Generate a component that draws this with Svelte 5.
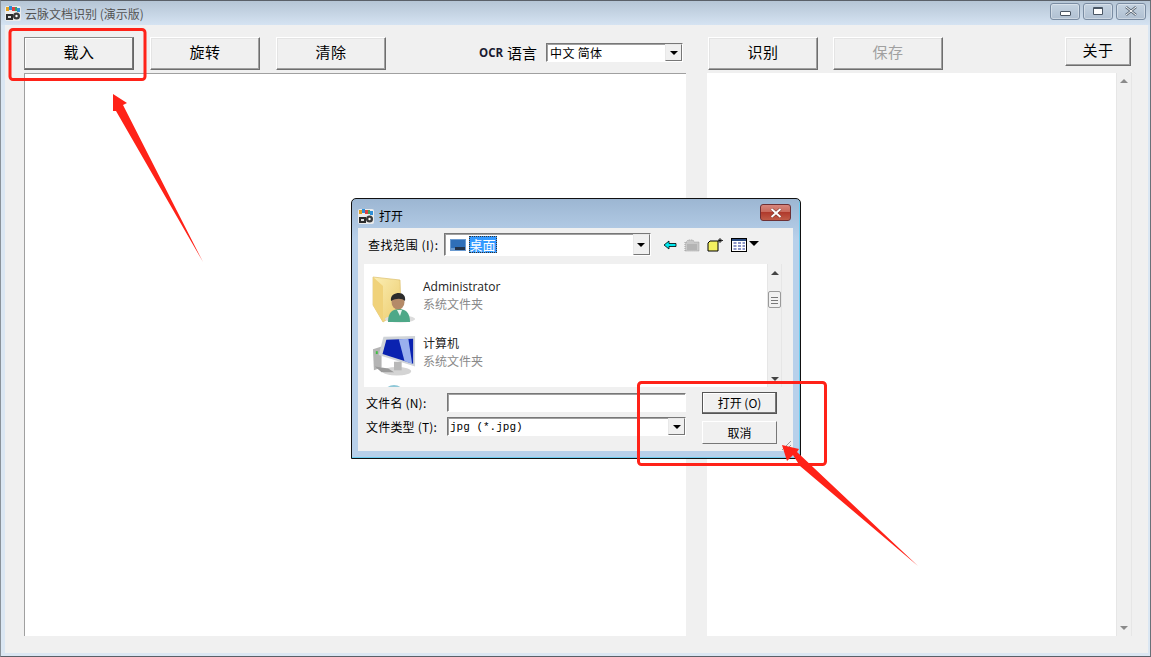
<script>
  const toolsLeft = [
    { label: '载入', cls: 'primary' },
    { label: '旋转' },
    { label: '清除' }
  ];
</script>

{#snippet appIcon()}
  <svg class="appicon" viewBox="0 0 16 16" width="16" height="16">
    <rect x="0" y="1" width="16" height="15" rx="2" fill="#ececec" />
    <rect x="1" y="2" width="3" height="4" fill="#e0a020" />
    <rect x="4" y="1" width="3" height="4" fill="#2f8fd8" />
    <rect x="7" y="2" width="3" height="4" fill="#e04040" />
    <rect x="10" y="2" width="2" height="4" fill="#40a060" />
    <rect x="12" y="3" width="3" height="4" fill="#2f8fd8" />
    <rect x="1" y="9" width="7" height="6" fill="#2c2c2c" />
    <rect x="3" y="11" width="3" height="2" fill="#ddd" />
    <circle cx="11.500" cy="11" r="3.500" fill="#3a3a3a" />
    <circle cx="11.500" cy="11" r="1.200" fill="#fff" />
  </svg>
{/snippet}

<div class="window">
  <div class="titlebar">
    {@render appIcon()}
    <span class="title">云脉文档识别 (演示版)</span>
    <div class="winbtns">
      <div class="winbtn"><span class="min"></span></div>
      <div class="winbtn"><span class="max"></span></div>
      <div class="winbtn close">
        <svg viewBox="0 0 14 10" width="14" height="10"><path d="M2 1l10 8M12 1L2 9" stroke="#5d6a78" stroke-width="2.6" /><path d="M2 1l10 8M12 1L2 9" stroke="#fff" stroke-width="1" /></svg>
      </div>
    </div>
  </div>

  <div class="client">
    <div class="toolbar">
      <div class="group left">
        {#each toolsLeft as t}
          <button class="btn {t.cls ?? ''}">{t.label}</button>
        {/each}
      </div>
      <div class="lang">
        <span class="ocr">OCR</span>
        <span class="langlabel">语言</span>
        <div class="select">
          <span class="seltext">中文 简体</span>
          <span class="drop small"><i></i></span>
        </div>
      </div>
      <div class="group right">
        <button class="btn">识别</button>
        <button class="btn disabled">保存</button>
        <button class="btn about">关于</button>
      </div>
    </div>

    <div class="panes">
      <div class="pane image"></div>
      <div class="pane text"></div>
      <div class="scrollbar">
        <span class="arr up"></span>
        <span class="arr down"></span>
      </div>
    </div>
  </div>
</div>

<div class="dialog">
  <div class="dlgtitle">
    {@render appIcon()}
    <span>打开</span>
    <div class="dlgclose">
      <svg viewBox="0 0 14 10" width="14" height="10"><path d="M2.5 1l9 8M11.5 1l-9 8" stroke="#6e2a22" stroke-width="3" /><path d="M2.5 1l9 8M11.5 1l-9 8" stroke="#fff" stroke-width="2" /></svg>
    </div>
  </div>
  <div class="dlgbody">
    <div class="lookin">
      <span class="dlglabel look">查找范围 (I):</span>
      <div class="field combo">
        <svg viewBox="0 0 16 12" width="16" height="12"><rect width="16" height="12" fill="#6a9ad0" /><rect x="1" y="1" width="14" height="8" fill="#2f6fb8" /><rect x="5" y="8" width="10" height="3" fill="#24344a" /></svg>
        <span class="sel">桌面</span>
        <span class="drop"><i></i></span>
      </div>
      <div class="navicons">
        <svg viewBox="0 0 14 12" width="14" height="12"><path d="M1 6l5-4v2.500h7v3H6V10z" fill="#00e8ee" stroke="#000" stroke-width=".8" /></svg>
        <svg viewBox="0 0 16 14" width="16" height="14"><path d="M1 13V4h2l1-2h5l1 2h5v9z" fill="#c8c8c8" stroke="#a0a0a0" stroke-dasharray="1 1" /><rect x="3" y="6" width="10" height="6" fill="#b4b4b4" /></svg>
        <svg viewBox="0 0 17 15" width="17" height="15"><path d="M1 14V6l2-2h8v10z" fill="#f4f060" stroke="#000" /><path d="M13 1v5M11 3.500h5M11.500 2l3 3M14.500 2l-3 3" stroke="#000" stroke-width=".8" /></svg>
        <svg class="views" viewBox="0 0 16 14" width="16" height="14"><rect x=".5" y=".5" width="15" height="13" fill="#fff" stroke="#000" /><rect x="1" y="1" width="14" height="2" fill="#2a4a80" /><path d="M2.500 5h3M7 5h3M11.500 5h2.500M2.500 8h3M7 8h3M11.500 8h2.500M2.500 11h3M7 11h3M11.500 11h2.500" stroke="#1a2a90" stroke-width="1.200" /></svg>
        <i class="viewarrow"></i>
      </div>
    </div>

    <div class="filelist">
      <div class="files">
        <div class="file">
          <svg viewBox="0 0 44 48" width="44" height="48">
            <defs>
              <linearGradient id="fold" x1="0" y1="0" x2="1" y2="1">
                <stop offset="0" stop-color="#fbeeb4" />
                <stop offset="1" stop-color="#eccb6c" />
              </linearGradient>
            </defs>
            <path d="M1 2l27 3 1 30-18 12L1 30z" fill="url(#fold)" stroke="#dcc070" stroke-width=".7" />
            <path d="M1 2l10 9v36L1 30z" fill="#f0d27a" />
            <ellipse cx="28" cy="44" rx="15" ry="3.500" fill="#dcdcdc" />
            <path d="M16 47c0-10 5-13 11-13s11 3 11 13z" fill="#4ea888" />
            <path d="M25 35h5l-2 6z" fill="#e8f4ee" />
            <ellipse cx="26" cy="27" rx="6.500" ry="7.500" fill="#b48a68" />
            <path d="M19 26c-1-6 4-8 8-8s7 3 6 8c-3-3-9-3-14 0z" fill="#2c2c2c" />
          </svg>
          <div class="meta">
            <div class="name">Administrator</div>
            <div class="sub">系统文件夹</div>
          </div>
        </div>
        <div class="file">
          <svg viewBox="0 0 46 43" width="44" height="43">
            <ellipse cx="26" cy="38" rx="15" ry="4.500" fill="#d4d4d4" />
            <path d="M1 15l9-3v22l-8 3z" fill="#b4b4b4" />
            <path d="M3 33l14 2 6 4-13 0z" fill="#9a9a9a" />
            <rect x="4" y="17" width="2" height="3" fill="#3fc040" />
            <path d="M12 2l33-1v32L7 21z" fill="#d0d4d8" />
            <path d="M15 5l28-1v26L11 20z" fill="#0a22b0" />
            <path d="M28 4.500l10-.5 4 26-8-2.500z" fill="#9ab0ee" />
            <rect x="23" y="28" width="8" height="9" fill="#b8b8b8" />
          </svg>
          <div class="meta">
            <div class="name">计算机</div>
            <div class="sub">系统文件夹</div>
          </div>
        </div>
        <div class="file peek">
          <svg viewBox="0 0 44 46" width="44" height="46"><circle cx="22" cy="12" r="11" fill="#8fc8d8" /></svg>
        </div>
      </div>
      <div class="dlgscroll">
        <span class="arr up dark"></span>
        <span class="thumb"></span>
        <span class="arr down dark"></span>
      </div>
    </div>

    <div class="dlgfields">
      <div class="fieldrows">
        <div class="row">
          <span class="dlglabel">文件名 (N):</span>
          <div class="field name-input"></div>
        </div>
        <div class="row">
          <span class="dlglabel">文件类型 (T):</span>
          <div class="field type-input"><span class="mono">jpg (*.jpg)</span><span class="drop"><i></i></span></div>
        </div>
      </div>
      <div class="dlgbtns">
        <button class="dbtn default">打开 (O)</button>
        <button class="dbtn cancel">取消</button>
      </div>
    </div>
    <svg class="grip" viewBox="0 0 12 12" width="12" height="12"><path d="M11 2L2 11M11 6l-5 5M11 10l-1 1" stroke="#9a9a9a" /></svg>
  </div>
</div>

<svg class="notes" viewBox="0 0 1151 657" width="1151" height="657">
  <rect class="mark" x="10" y="29.500" width="135" height="50" rx="3" />
  <rect class="mark" x="638.500" y="382.500" width="187" height="82" rx="3" />
  <polygon class="pointer" points="113,94 127,103 123,105 203,262 116,111 113,111" />
  <polygon class="pointer" points="782,445 799,449 797,452 918,566 800,466 793,455 787,461" />
</svg>

<style>
  :global(body) {
    margin: 0;
    background: #f0f0f0;
    overflow: hidden;
  }

  .window {
    width: 1151px;
    height: 657px;
    box-sizing: border-box;
    display: flex;
    flex-direction: column;
    background: #dbe7f3;
    border: 1px solid #5a6068;
    border-right-color: #6a7078;
    border-left-color: #8a929a;
    font-family: "Noto Sans CJK SC", "Liberation Sans", sans-serif;
    color: #000;
  }

  .titlebar {
    height: 24px;
    flex: none;
    display: flex;
    align-items: center;
    padding: 0 2px 0 4px;
    background: linear-gradient(#b5c5d5, #d5e3f2);
  }
  .appicon {
    flex: none;
  }
  .title {
    margin-left: 4px;
    font-size: 12px;
    color: #555;
  }
  .winbtns {
    margin-left: auto;
    margin-right: 2px;
    margin-top: -4px;
    display: flex;
    gap: 3px;
  }
  .winbtn {
    width: 30px;
    height: 17px;
    box-sizing: border-box;
    border: 1px solid #7a8ca2;
    border-radius: 3px;
    background: linear-gradient(#c4d2e0, #b0c0d2);
    display: flex;
    align-items: center;
    justify-content: center;
    box-shadow: inset 0 0 0 1px rgba(255, 255, 255, .35);
  }
  .min {
    width: 9px;
    height: 3px;
    margin-top: 5px;
    background: #fff;
    border: 1px solid #4a5664;
    border-radius: 1px;
  }
  .max {
    width: 8px;
    height: 5px;
    background: #fff;
    border: 1px solid #4a5664;
    border-top-width: 2px;
    border-radius: 1px;
  }

  .client {
    flex: 1;
    margin: 0 2px 3px 4px;
    background: #f0f0f0;
    display: flex;
    flex-direction: column;
    padding: 12px 0 17px 19px;
    min-height: 0;
  }

  .toolbar {
    display: flex;
    align-items: flex-start;
    height: 36px;
    flex: none;
  }
  .group {
    display: flex;
  }
  .group.left {
    gap: 16px;
  }
  .group.right {
    gap: 15px;
    margin-left: 25px;
  }

  .btn {
    width: 110px;
    height: 33px;
    padding: 0 0 4px;
    box-sizing: border-box;
    background: #f0f0f0;
    font: 15px "Noto Sans CJK SC", sans-serif;
    letter-spacing: 0.5px;
    color: #000;
    border: 1px solid;
    border-color: #fff #6e6e6e #6e6e6e #fff;
    box-shadow: inset -1px -1px 0 #a0a0a0, inset 1px 1px 0 #e4e4e4;
  }
  .btn.primary {
    border: 1px solid #8a8a8a;
    border-right-color: #666;
    border-bottom-color: #666;
    box-shadow: inset -1px -1px 0 #777, inset 1px 1px 0 #fff;
  }
  .btn.disabled {
    color: #a0a0a0;
  }
  .btn.about {
    width: 66px;
    height: 29px;
    margin-left: 107px;
  }

  .lang {
    margin-left: 93px;
    margin-top: 6px;
    display: flex;
    align-items: center;
    height: 19px;
  }
  .ocr {
    font: bold 11.500px "Open Sans", "Liberation Sans", sans-serif;
    color: #1a1a30;
  }
  .langlabel {
    font-size: 15px;
    margin-left: 4px;
    margin-top: -1px;
  }
  .select {
    margin-left: 9px;
    width: 137px;
    height: 19px;
    box-sizing: border-box;
    background: #fff;
    border: 1px solid;
    border-color: #777 #fff #fff #777;
    box-shadow: inset 1px 1px 0 #a0a0a0;
    display: flex;
    align-items: center;
    padding-left: 3px;
    font-size: 12px;
  }
  .seltext {
    letter-spacing: 0.3px;
  }

  .drop {
    margin-left: auto;
    flex: none;
    width: 17px;
    height: 100%;
    box-sizing: border-box;
    background: #f0f0f0;
    border: 1px solid;
    border-color: #e8e8e8 #777 #777 #e8e8e8;
    display: flex;
    align-items: center;
    justify-content: center;
  }
  .drop i {
    width: 0;
    height: 0;
    border: 4px solid transparent;
    border-top: 4px solid #000;
    border-bottom: 0;
  }

  .panes {
    flex: 1;
    display: flex;
    min-height: 0;
  }
  .pane {
    background: #fff;
  }
  .image {
    width: 662px;
    box-sizing: border-box;
    border-top: 1px solid #a0a0a0;
    border-left: 1px solid #a0a0a0;
  }
  .text {
    margin-left: 21px;
    width: 409px;
  }
  .scrollbar {
    width: 16px;
    box-sizing: border-box;
    border-left: 1px solid #e6e6e6;
    border-right: 1px solid #e6e6e6;
    display: flex;
    flex-direction: column;
    justify-content: space-between;
    align-items: center;
    padding: 6px 0;
  }
  .arr {
    width: 0;
    height: 0;
    border: 4px solid transparent;
  }
  .arr.up {
    border-top: 0;
    border-bottom: 4px solid #8a8a8a;
  }
  .arr.down {
    border-bottom: 0;
    border-top: 4px solid #8a8a8a;
  }
  .arr.dark.up {
    border-bottom-color: #444;
  }
  .arr.dark.down {
    border-top-color: #444;
  }

  .dialog {
    position: absolute;
    left: 351px;
    top: 198px;
    width: 450px;
    height: 261px;
    box-sizing: border-box;
    border: 1px solid #111;
    border-radius: 5px 5px 0 0;
    background: linear-gradient(#9cb6d2 0, #b8d0ea 40px, #b8d0ea 100%);
    display: flex;
    flex-direction: column;
    padding: 0 7px 7px 6px;
    font-family: "Noto Sans CJK SC", "Liberation Sans", sans-serif;
    font-size: 12px;
    box-shadow: inset -1px -1px 0 #6ccdf0;
  }
  .dlgtitle {
    height: 29px;
    flex: none;
    display: flex;
    align-items: center;
    gap: 5px;
    font-size: 12px;
    padding-top: 4px;
    box-sizing: border-box;
  }
  .dlgclose {
    margin-left: auto;
    margin-right: 2px;
    margin-top: -6px;
    width: 31px;
    height: 17px;
    box-sizing: border-box;
    border: 1px solid #6e3034;
    border-radius: 3px;
    background: linear-gradient(#d8867c 0, #c86a5c 45%, #b03a2c 50%, #c05c48 100%);
    display: flex;
    align-items: center;
    justify-content: center;
  }

  .dlgbody {
    flex: 1;
    position: relative;
    background: #f0f0f0;
    display: flex;
    flex-direction: column;
    min-height: 0;
    padding-left: 6px;
  }
  .lookin {
    height: 36px;
    flex: none;
    display: flex;
    align-items: center;
    padding-left: 4px;
    padding-bottom: 3px;
    box-sizing: border-box;
  }
  .dlglabel {
    white-space: nowrap;
    letter-spacing: 0.2px;
  }
  .dlglabel.look {
    letter-spacing: 0.55px;
  }
  .field {
    box-sizing: border-box;
    background: #fff;
    border: 1px solid;
    border-color: #777 #fff #fff #777;
    box-shadow: inset 1px 1px 0 #a0a0a0;
    display: flex;
    align-items: center;
  }
  .combo {
    margin-left: 5px;
    width: 207px;
    height: 23px;
    padding-left: 5px;
    gap: 3px;
  }
  .sel {
    background: #3399ff;
    color: #fff;
    font-size: 13px;
    line-height: 17px;
    outline: 1px dotted #333;
    outline-offset: -1px;
    padding: 0 1px;
  }
  .navicons {
    margin-left: 12px;
    display: flex;
    align-items: center;
    gap: 7px;
  }
  .views {
    margin-left: 0;
  }
  .viewarrow {
    width: 0;
    height: 0;
    margin-left: -5px;
    margin-top: -3px;
    border: 5px solid transparent;
    border-top: 5px solid #000;
    border-bottom: 0;
  }

  .filelist {
    height: 123px;
    flex: none;
    margin-right: 11px;
    display: flex;
    background: #fff;
  }
  .files {
    flex: 1;
    overflow: hidden;
    padding: 6px 0 0 8px;
  }
  .file {
    display: flex;
    align-items: center;
    height: 57px;
    gap: 7px;
  }
  .file.peek {
    height: 10px;
    align-items: flex-start;
    overflow: hidden;
  }
  .meta {
    display: flex;
    flex-direction: column;
    gap: 1px;
    margin-top: -7px;
    line-height: 16px;
  }
  .name {
    font-size: 12px;
    color: #222;
    font-family: "Open Sans", "Noto Sans CJK SC", sans-serif;
  }
  .sub {
    color: #8a8a8a;
    font-size: 12px;
  }
  .dlgscroll {
    width: 15px;
    box-sizing: border-box;
    flex: none;
    background: #f0f0f0;
    border-left: 1px solid #e6e6e6;
    border-right: 1px solid #e6e6e6;
    display: flex;
    flex-direction: column;
    align-items: center;
    padding: 7px 0 6px;
  }
  .thumb {
    margin-top: 16px;
    width: 13px;
    height: 17px;
    flex: none;
    box-sizing: border-box;
    border: 1px solid #9a9a9a;
    border-radius: 2px;
    background: repeating-linear-gradient(#f2f2f2 0, #f2f2f2 2px, #777 2px, #777 3px);
    background-size: 7px 9px;
    background-position: center;
    background-repeat: no-repeat;
  }
  .dlgscroll .down {
    margin-top: auto;
  }

  .dlgfields {
    flex: 1;
    display: flex;
    padding-top: 6px;
    padding-left: 2px;
  }
  .fieldrows {
    width: 320px;
    display: flex;
    flex-direction: column;
    gap: 5px;
  }
  .row {
    display: flex;
    align-items: center;
    justify-content: space-between;
  }
  .dlgfields .dlglabel {
    margin-top: -1px;
  }
  .name-input,
  .type-input {
    width: 239px;
    height: 19px;
  }
  .type-input {
    padding-left: 2px;
  }
  .mono {
    font-family: "Liberation Mono", monospace;
    font-size: 11px;
  }
  .dlgbtns {
    margin-left: 16px;
    margin-top: -1px;
    display: flex;
    flex-direction: column;
    gap: 7px;
  }
  .dbtn {
    width: 75px;
    height: 22px;
    padding: 0 0 1px;
    box-sizing: border-box;
    background: #f0f0f0;
    font: 12px "Noto Sans CJK SC", sans-serif;
    color: #000;
    border: 1px solid;
    border-color: #fff #777 #777 #fff;
  }
  .dbtn.cancel {
    height: 23px;
  }
  .dbtn.default {
    border: 1px solid #555;
    box-shadow: inset -1px -1px 0 #777, inset 1px 1px 0 #fff;
  }
  .grip {
    position: absolute;
    right: 1px;
    bottom: 0;
  }

  .notes {
    position: absolute;
    left: 0;
    top: 0;
    pointer-events: none;
  }
  .mark {
    fill: none;
    stroke: #ff2218;
    stroke-width: 3;
  }
  .pointer {
    fill: #ff2218;
  }
</style>
